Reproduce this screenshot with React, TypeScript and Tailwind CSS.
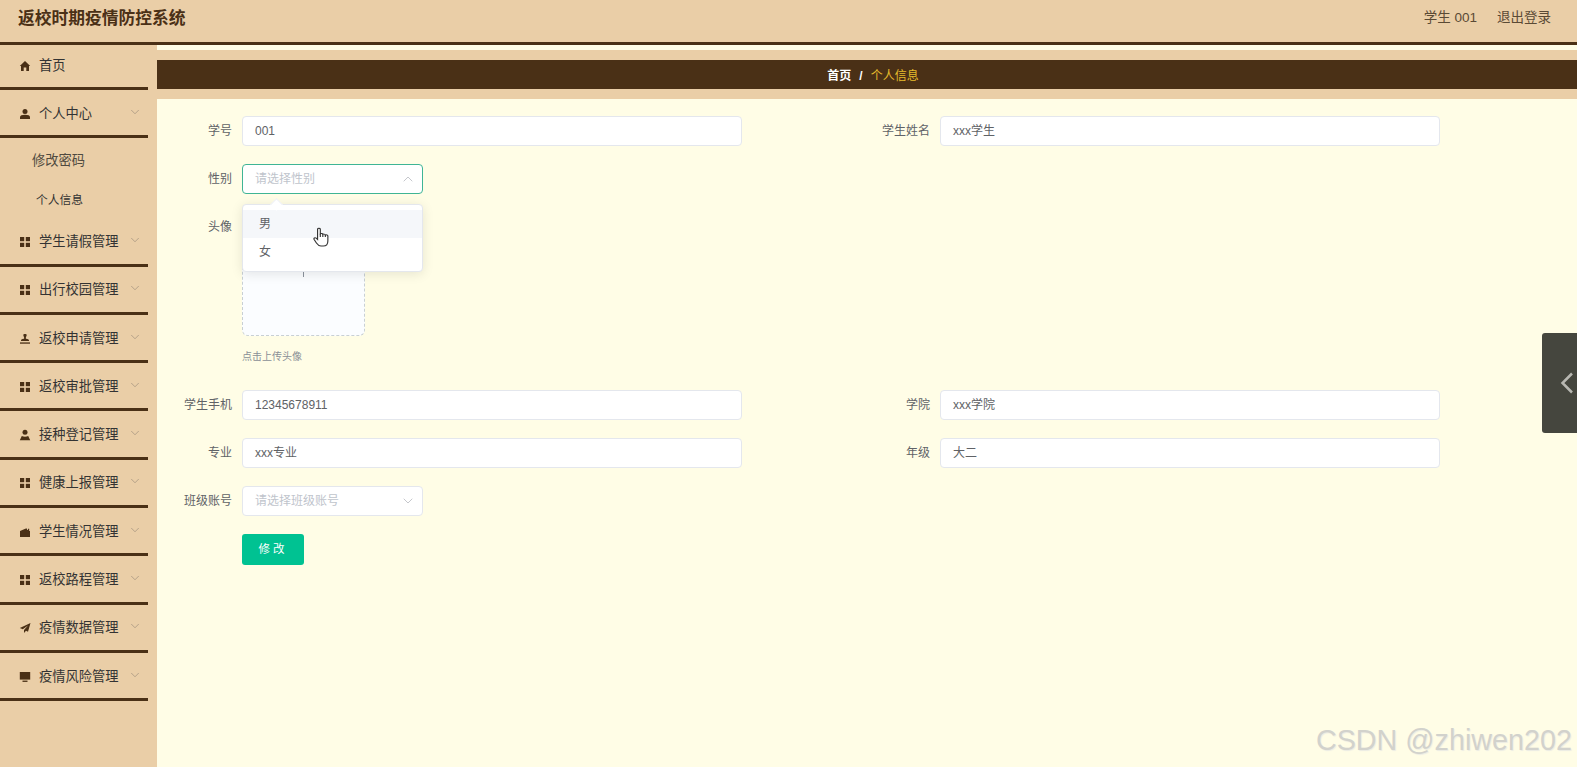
import { ChevronDown, ChevronUp } from "lucide-react";
import type { ReactNode } from "react";

const cjk = { fontFamily: '"Liberation Sans", "Noto Sans CJK SC", sans-serif' };

const HomeIcon = () => (
  <svg viewBox="0 0 12 12" className="h-[12px] w-[12px] fill-[#4a3016]">
    <path d="M6 1 11.2 6H10v5H7.3V7.6H4.7V11H2V6H.8z" />
  </svg>
);
const UserIcon = () => (
  <svg viewBox="0 0 12 12" className="h-[12px] w-[12px] fill-[#4a3016]">
    <circle cx="6" cy="3.4" r="2.5" />
    <path d="M1 11V9.2C1 7.6 3 6.8 6 6.8s5 .8 5 2.4V11z" />
  </svg>
);
const GridIcon = () => (
  <svg viewBox="0 0 12 12" className="h-[12px] w-[12px] fill-[#4a3016]">
    <rect x="1" y="1" width="4.2" height="4.2" />
    <rect x="6.8" y="1" width="4.2" height="4.2" />
    <rect x="1" y="6.8" width="4.2" height="4.2" />
    <rect x="6.8" y="6.8" width="4.2" height="4.2" />
  </svg>
);
const StampIcon = () => (
  <svg viewBox="0 0 12 12" className="h-[12px] w-[12px] fill-[#4a3016]">
    <path d="M4.3 2.100C4.3 1.300 5 1 6 1s1.700.3 1.700 1.100c0 1-.9 1.700-.9 3.100 0 .8 3.200.6 3.200 2.300v.5H2v-.5c0-1.700 3.200-1.500 3.200-2.300 0-1.400-.9-2.100-.9-3.100z" />
    <rect x="1" y="9.400" width="10" height="1.300" />
  </svg>
);
const PersonIcon = () => (
  <svg viewBox="0 0 12 12" className="h-[12px] w-[12px] fill-[#4a3016]">
    <circle cx="6" cy="3.200" r="2.500" />
    <path d="M.8 11.200 2.800 7c1.800 1 4.600 1 6.400 0l2 4.200z" />
  </svg>
);
const WalletIcon = () => (
  <svg viewBox="0 0 12 12" className="h-[12px] w-[12px] fill-[#4a3016]">
    <path d="M1 5 7.500 2.200l.9 1.800H9V2.800h1.200V5H11v6H1z" />
  </svg>
);
const PlaneIcon = () => (
  <svg viewBox="0 0 12 12" className="h-[12px] w-[12px] fill-[#4a3016]">
    <path d="M11.500 1 .8 6l3 1.200L9 3.500 5 8v3l2-2.200 2 1z" />
  </svg>
);
const MonitorIcon = () => (
  <svg viewBox="0 0 12 12" className="h-[12px] w-[12px] fill-[#4a3016]">
    <rect x=".8" y="1" width="10.400" height="7.600" />
    <rect x="3.500" y="9.600" width="5" height="1.300" />
  </svg>
);

const HandCursor = () => (
  <svg viewBox="0 0 14 20" preserveAspectRatio="none" className="absolute left-[70px] top-[22px] h-[20px] w-[16px] fill-white stroke-[#333333] stroke-[1]">
    <path d="M4 2.200C4 1 6.400 1 6.400 2.200V6.800C7 6.300 8.300 6.300 8.600 7.300C9.200 6.900 10.500 7 10.800 8C11.500 7.600 13 7.900 13 9V14C13 17 11.500 19 9 19H7C5 19 4.200 18 3 16L1 12.500C.3 11.200 1.800 10.200 2.800 11.200L4 12.500Z" />
    <path d="M6.400 6.800V10M8.600 7.300V10M10.800 8V10" />
  </svg>
);

const menus: { label: string; icon: ReactNode }[] = [
  { label: "学生请假管理", icon: <GridIcon /> },
  { label: "出行校园管理", icon: <GridIcon /> },
  { label: "返校申请管理", icon: <StampIcon /> },
  { label: "返校审批管理", icon: <GridIcon /> },
  { label: "接种登记管理", icon: <PersonIcon /> },
  { label: "健康上报管理", icon: <GridIcon /> },
  { label: "学生情况管理", icon: <WalletIcon /> },
  { label: "返校路程管理", icon: <GridIcon /> },
  { label: "疫情数据管理", icon: <PlaneIcon /> },
  { label: "疫情风险管理", icon: <MonitorIcon /> },
];

function MenuItem({ label, icon, arrow = true, short = false }: { label: string; icon: ReactNode; arrow?: boolean; short?: boolean }) {
  return (
    <div className={`flex items-center border-b-[3px] border-[#4a3016] pl-[19px] pr-[6px] text-[13.250px] text-[#333333] ${short ? "h-[45px]" : "h-[48.300px] pt-[2px]"}`}>
      <span className="flex w-[12px] justify-center">{icon}</span>
      <span className="ml-[8px] flex-1">{label}</span>
      {arrow && <ChevronDown size={14} strokeWidth={1} className="-translate-y-[2px] text-[#8f8272]" />}
    </div>
  );
}

function Sidebar() {
  return (
    <aside className="w-[157px] shrink-0 bg-[#eacea7]">
      <div className="w-[148px]">
        <MenuItem label="首页" icon={<HomeIcon />} arrow={false} short />
        <MenuItem label="个人中心" icon={<UserIcon />} />
        <div className="pt-[3px]">
          <div className="flex h-[39px] items-center pl-[32px] text-[13.250px] text-[#4f4a40]">修改密码</div>
          <div className="flex h-[38px] items-center pl-[36px] pt-[1px] text-[11.750px] text-[#333333]">个人信息</div>
        </div>
        {menus.map((m) => (
          <MenuItem key={m.label} label={m.label} icon={m.icon} />
        ))}
      </div>
    </aside>
  );
}

function Label({ children }: { children: ReactNode }) {
  return <label className="h-[30px] w-[75px] text-right text-[12px] leading-[31px] text-[#606266]">{children}</label>;
}

function TextField({ label, value }: { label: string; value: string }) {
  return (
    <div className="flex w-[698px] gap-[10px]">
      <Label>{label}</Label>
      <div className="flex h-[30px] w-[500px] items-center rounded-[4px] border border-[#e4e7ed] bg-white px-[12px] text-[12px] text-[#606266]">
        {value}
      </div>
    </div>
  );
}

function SelectField({ label, placeholder, open = false }: { label: string; placeholder: string; open?: boolean }) {
  const Arrow = open ? ChevronUp : ChevronDown;
  return (
    <div className="flex gap-[10px]">
      <Label>{label}</Label>
      <div className={`flex h-[30px] w-[181px] items-center justify-between rounded-[4px] border bg-white pl-[12px] pr-[6px] text-[12px] text-[#c0c4cc] ${open ? "border-[#3fb595]" : "border-[#e4e7ed]"}`}>
        {placeholder}
        <Arrow size={16} strokeWidth={1} className="text-[#a8abb2]" />
      </div>
    </div>
  );
}

function GenderDropdown() {
  return (
    <div className="absolute left-[85px] top-[40px] z-10 w-[181px] rounded-[4px] border border-[#e4e7ed] bg-white py-[5px] text-[12px] text-[#606266] shadow-[0_2px_12px_rgba(0,0,0,0.1)]">
      <div className="absolute -top-[5px] left-[29px] h-[9px] w-[9px] rotate-45 border-l border-t border-[#eef0f3] bg-white" />
      <div className="flex h-[28px] items-center bg-[#f5f7fa] pl-[16px]">男</div>
      <div className="flex h-[28px] items-center pl-[16px]">女</div>
      <HandCursor />
    </div>
  );
}

function Form() {
  return (
    <div className="flex flex-1 flex-col pt-[17px]">
      <div className="mb-[18px] flex">
        <TextField label="学号" value="001" />
        <TextField label="学生姓名" value="xxx学生" />
      </div>
      <div className="relative z-10 mb-[18px]">
        <SelectField label="性别" placeholder="请选择性别" open />
        <GenderDropdown />
      </div>
      <div className="mb-[26px] flex gap-[10px]">
        <Label>头像</Label>
        <div>
          <div className="flex h-[124px] w-[123px] items-center justify-center rounded-[6px] border border-dashed border-[#c8d0d4] bg-[#fbfdff]">
            <span className="h-[8px] w-px translate-y-[-1px] bg-[#8c939d]" />
          </div>
          <p className="mt-[14px] text-[10px] leading-[14px] text-[#8a8f96]">点击上传头像</p>
        </div>
      </div>
      <div className="mb-[18px] flex">
        <TextField label="学生手机" value="12345678911" />
        <TextField label="学院" value="xxx学院" />
      </div>
      <div className="mb-[18px] flex">
        <TextField label="专业" value="xxx专业" />
        <TextField label="年级" value="大二" />
      </div>
      <div className="mb-[18px]">
        <SelectField label="班级账号" placeholder="请选择班级账号" />
      </div>
      <div className="pl-[85px]">
        <button className="h-[31px] w-[62px] rounded-[3px] bg-[#00c292] text-[11.500px] tracking-[3px] text-white">修改</button>
      </div>
    </div>
  );
}

export default function App() {
  return (
    <div className="relative flex h-[767px] w-[1577px] flex-col overflow-hidden bg-[#fffde6]" style={cjk}>
      <header className="flex h-[45px] shrink-0 items-center justify-between border-b-[3px] border-[#4a3016] bg-[#eacea7] pb-[5px] pl-[18px] pr-[26px]">
        <h1 className="text-[16.750px] font-bold text-[#4a3016]">返校时期疫情防控系统</h1>
        <div className="flex gap-[20px] text-[13.500px] text-[#5a4a35]">
          <span>学生 001</span>
          <span>退出登录</span>
        </div>
      </header>
      <div className="flex flex-1">
        <Sidebar />
        <main className="flex flex-1 flex-col">
          <div className="mt-[5px] bg-[#eacea7] py-[10px]">
            <div className="flex h-[29px] items-center justify-center gap-[8px] bg-[#4a3016] pl-[12px] pt-[2px] text-[12px] font-bold">
              <span className="text-white">首页</span>
              <span className="text-white">/</span>
              <span className="font-normal text-[#e6bb2c]">个人信息</span>
            </div>
          </div>
          <Form />
        </main>
      </div>
      <div className="absolute right-0 top-[333px] flex h-[100px] w-[35px] items-center justify-end rounded-l-[3px] bg-[#45463e] pr-[3px]">
        <svg viewBox="0 0 14 22" className="h-[22px] w-[14px] fill-none stroke-[#b8b8b2] stroke-[2.500]">
          <path d="M12 1.500 2.500 11 12 20.500" />
        </svg>
      </div>
      <div className="absolute right-[5px] top-[722px] whitespace-nowrap text-[28.750px] leading-[36px] text-[#d2d2cc] [text-shadow:1px_1px_1px_#ecece4]">
        CSDN @zhiwen202
      </div>
    </div>
  );
}
